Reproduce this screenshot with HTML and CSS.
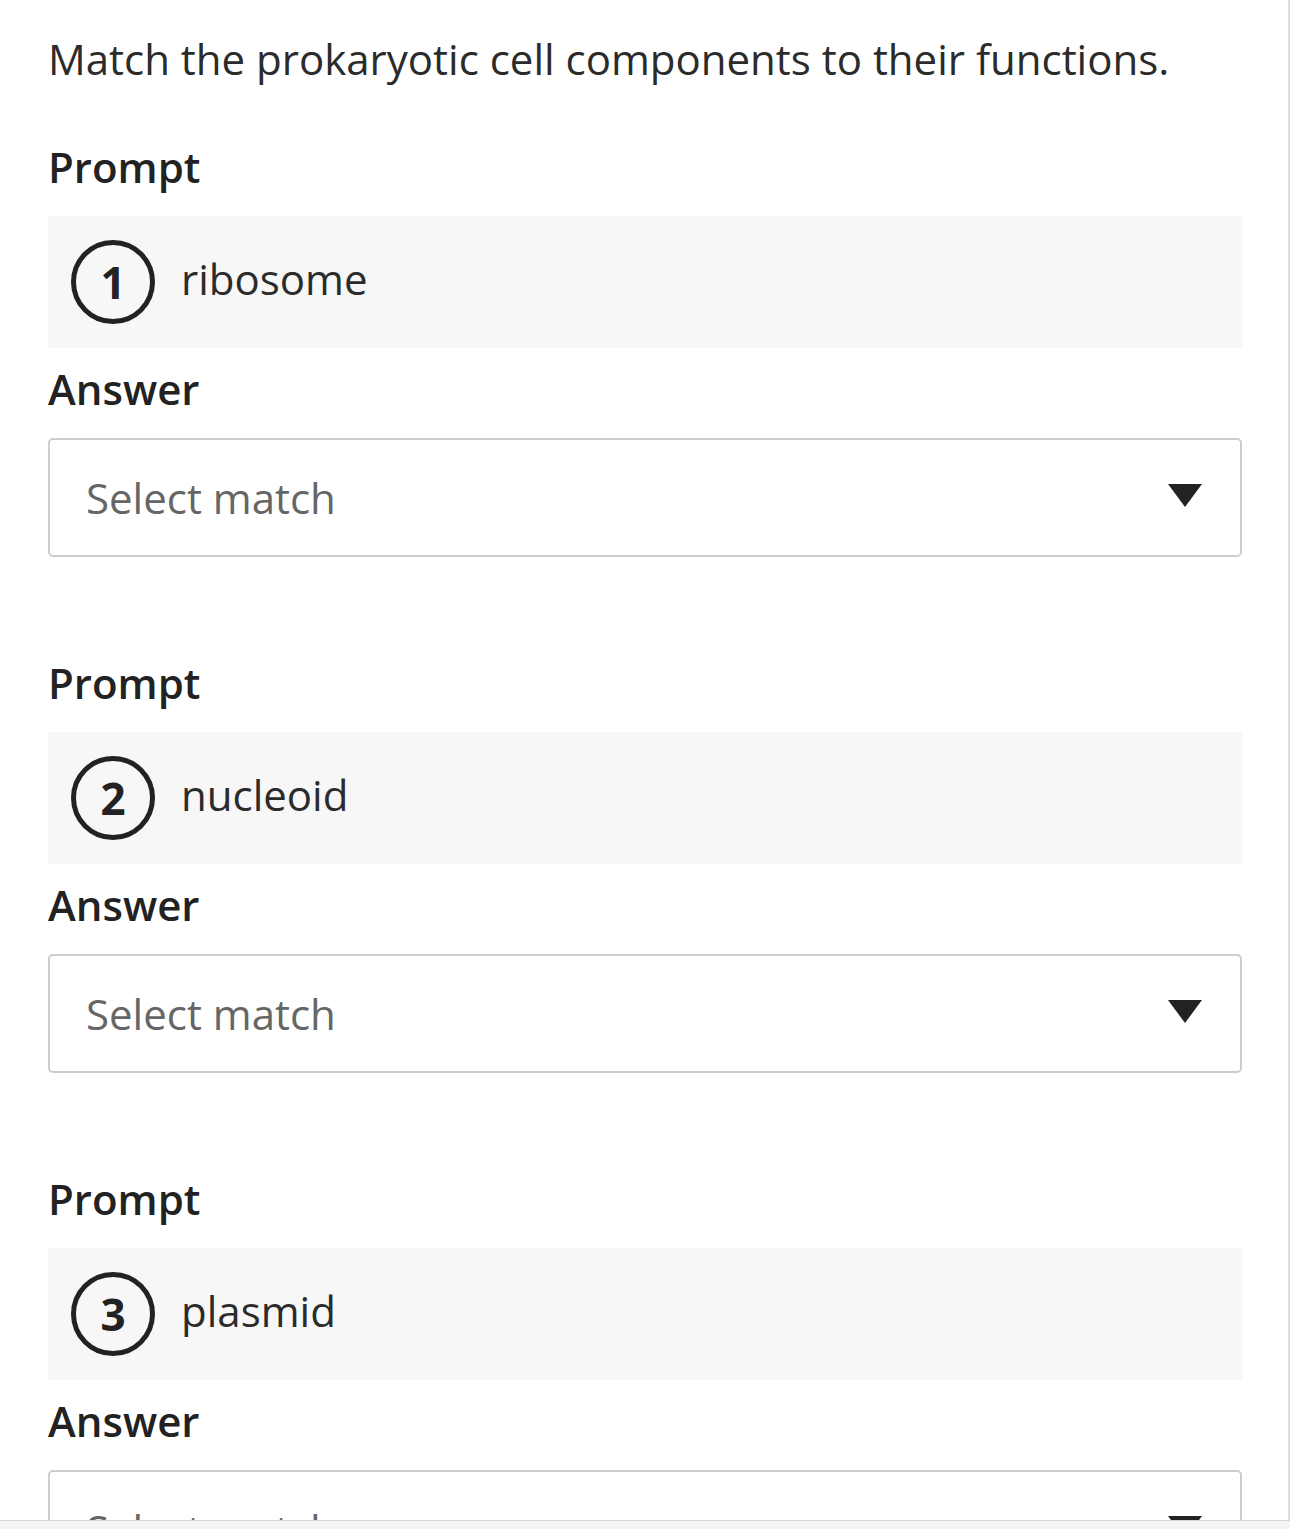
FILE: index.html
```html
<!DOCTYPE html>
<html lang="en">

<head>
    <meta charset="UTF-8">
    <meta name="viewport" content="width=device-width, initial-scale=1.0">
    <title>Matching</title>
    <link rel="stylesheet" href="styles.css">
</head>

<body>
    <div class="page">
        <p class="question">Match the prokaryotic cell components to their functions.</p>

        <!-- 1 -->
        <div class="pair">
            <h3 class="label">Prompt</h3>
            <div class="prompt-box">
                <span class="num">1</span>
                <span class="prompt-text">ribosome</span>
            </div>
            <h3 class="label label-answer">Answer</h3>
            <div class="select">
                <span class="select-text">Select match</span>
                <svg class="caret" width="34" height="23" viewBox="0 0 34 23"><path d="M0 0H34L17 23Z" fill="#222"/></svg>
            </div>
        </div>

        <!-- 2 -->
        <div class="pair">
            <h3 class="label">Prompt</h3>
            <div class="prompt-box">
                <span class="num">2</span>
                <span class="prompt-text">nucleoid</span>
            </div>
            <h3 class="label label-answer">Answer</h3>
            <div class="select">
                <span class="select-text">Select match</span>
                <svg class="caret" width="34" height="23" viewBox="0 0 34 23"><path d="M0 0H34L17 23Z" fill="#222"/></svg>
            </div>
        </div>

        <!-- 3 -->
        <div class="pair">
            <h3 class="label">Prompt</h3>
            <div class="prompt-box">
                <span class="num">3</span>
                <span class="prompt-text">plasmid</span>
            </div>
            <h3 class="label label-answer">Answer</h3>
            <div class="select">
                <span class="select-text">Select match</span>
                <svg class="caret" width="34" height="23" viewBox="0 0 34 23"><path d="M0 0H34L17 23Z" fill="#222"/></svg>
            </div>
        </div>
    </div>
</body>

</html>
```

FILE: styles.css
```css
* {
    margin: 0;
    padding: 0;
    box-sizing: border-box;
}

body {
    background-color: #f4f4f4;
    font-family: "Open Sans", "Liberation Sans", sans-serif;
    color: #2b2b2b;
}

.page {
    width: 1290px;
    height: 1521px;
    padding: 31px 46px 0 48px;
    background-color: #fff;
    border-right: 2px solid #dcdcdc;
    border-bottom: 1px solid #d6d6d6;
    overflow: hidden;
}

.question {
    font-size: 42px;
    line-height: 56px;
}

.pair {
    margin-top: 52px;
}

.pair + .pair {
    margin-top: 98px;
}

.label {
    font-size: 42px;
    line-height: 56px;
    font-weight: 600;
    color: #222;
}

.label-answer {
    margin-top: 13px;
}

.prompt-box {
    display: flex;
    align-items: center;
    height: 132px;
    margin-top: 21px;
    padding-left: 23px;
    background-color: #f7f7f7;
    border-radius: 4px;
}

.num {
    display: flex;
    align-items: center;
    justify-content: center;
    width: 84px;
    height: 84px;
    border: 5px solid #222;
    border-radius: 50%;
    font-size: 44px;
    font-weight: 700;
    color: #222;
    line-height: 1;
}

.prompt-text {
    margin-left: 26px;
    font-size: 42px;
    line-height: 56px;
    padding-bottom: 6px;
}

.select {
    display: flex;
    align-items: center;
    justify-content: space-between;
    height: 119px;
    margin-top: 21px;
    padding: 0 38px 0 36px;
    border: 2px solid #cdcdcd;
    border-radius: 5px;
    background-color: #fff;
}

.select-text {
    font-size: 42px;
    line-height: 56px;
    color: #666;
}

.caret {
    display: block;
    margin-top: -4px;
}
```
